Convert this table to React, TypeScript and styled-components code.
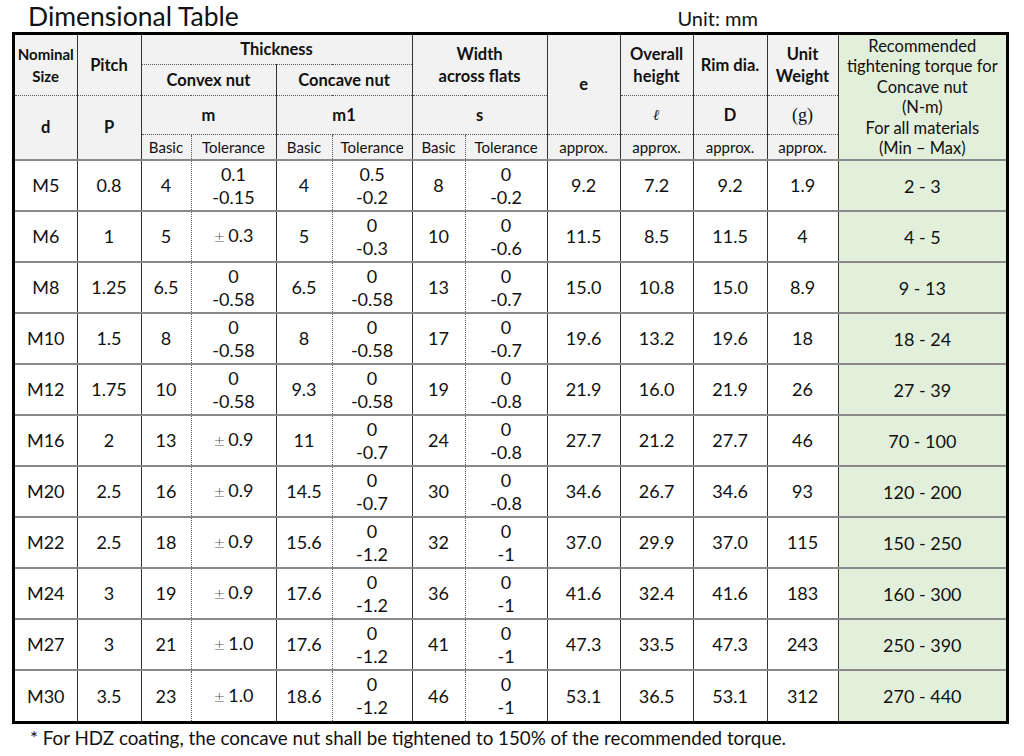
import styled, { createGlobalStyle } from 'styled-components';

type Tol = string | [string, string];

type NutRow = {
  size: string;
  pitch: string;
  m: string;
  mTol: Tol;
  m1: string;
  m1Tol: Tol;
  s: string;
  sTol: Tol;
  e: string;
  height: string;
  rim: string;
  weight: string;
  torque: string;
};

const rows: NutRow[] = [
  { size: 'M5', pitch: '0.8', m: '4', mTol: ['0.1', '-0.15'], m1: '4', m1Tol: ['0.5', '-0.2'], s: '8', sTol: ['0', '-0.2'], e: '9.2', height: '7.2', rim: '9.2', weight: '1.9', torque: '2 - 3' },
  { size: 'M6', pitch: '1', m: '5', mTol: '0.3', m1: '5', m1Tol: ['0', '-0.3'], s: '10', sTol: ['0', '-0.6'], e: '11.5', height: '8.5', rim: '11.5', weight: '4', torque: '4 - 5' },
  { size: 'M8', pitch: '1.25', m: '6.5', mTol: ['0', '-0.58'], m1: '6.5', m1Tol: ['0', '-0.58'], s: '13', sTol: ['0', '-0.7'], e: '15.0', height: '10.8', rim: '15.0', weight: '8.9', torque: '9 - 13' },
  { size: 'M10', pitch: '1.5', m: '8', mTol: ['0', '-0.58'], m1: '8', m1Tol: ['0', '-0.58'], s: '17', sTol: ['0', '-0.7'], e: '19.6', height: '13.2', rim: '19.6', weight: '18', torque: '18 - 24' },
  { size: 'M12', pitch: '1.75', m: '10', mTol: ['0', '-0.58'], m1: '9.3', m1Tol: ['0', '-0.58'], s: '19', sTol: ['0', '-0.8'], e: '21.9', height: '16.0', rim: '21.9', weight: '26', torque: '27 - 39' },
  { size: 'M16', pitch: '2', m: '13', mTol: '0.9', m1: '11', m1Tol: ['0', '-0.7'], s: '24', sTol: ['0', '-0.8'], e: '27.7', height: '21.2', rim: '27.7', weight: '46', torque: '70 - 100' },
  { size: 'M20', pitch: '2.5', m: '16', mTol: '0.9', m1: '14.5', m1Tol: ['0', '-0.7'], s: '30', sTol: ['0', '-0.8'], e: '34.6', height: '26.7', rim: '34.6', weight: '93', torque: '120 - 200' },
  { size: 'M22', pitch: '2.5', m: '18', mTol: '0.9', m1: '15.6', m1Tol: ['0', '-1.2'], s: '32', sTol: ['0', '-1'], e: '37.0', height: '29.9', rim: '37.0', weight: '115', torque: '150 - 250' },
  { size: 'M24', pitch: '3', m: '19', mTol: '0.9', m1: '17.6', m1Tol: ['0', '-1.2'], s: '36', sTol: ['0', '-1'], e: '41.6', height: '32.4', rim: '41.6', weight: '183', torque: '160 - 300' },
  { size: 'M27', pitch: '3', m: '21', mTol: '1.0', m1: '17.6', m1Tol: ['0', '-1.2'], s: '41', sTol: ['0', '-1'], e: '47.3', height: '33.5', rim: '47.3', weight: '243', torque: '250 - 390' },
  { size: 'M30', pitch: '3.5', m: '23', mTol: '1.0', m1: '18.6', m1Tol: ['0', '-1.2'], s: '46', sTol: ['0', '-1'], e: '53.1', height: '36.5', rim: '53.1', weight: '312', torque: '270 - 440' },
];

const colWidths = [62, 64, 50, 85, 56, 80, 53, 82, 73, 73, 74, 71, 168];

const ToleranceValue = ({ tol }: { tol: Tol }) => {
  if (typeof tol === 'string') {
    return (
      <span>
        <PlusMinus>±</PlusMinus>
        {tol}
      </span>
    );
  }
  return (
    <TolStack>
      <span>{tol[0]}</span>
      <span>{tol[1]}</span>
    </TolStack>
  );
};

const App = () => {
  return (
    <Page>
      <GlobalStyle />
      <TitleBar>
        <Title>Dimensional Table</Title>
        <Unit>Unit: mm</Unit>
      </TitleBar>
      <TableFrame>
        <Table>
          <colgroup>
            {colWidths.map((w, i) => (
              <col key={i} style={{ width: w }} />
            ))}
          </colgroup>
          <thead>
            <HeadRow $h={29}>
              <HeadCell rowSpan={2} $size={15}>
                Nominal
                <br />
                Size
              </HeadCell>
              <HeadCell rowSpan={2}>Pitch</HeadCell>
              <HeadCell colSpan={4}>Thickness</HeadCell>
              <HeadCell colSpan={2} rowSpan={2}>
                Width
                <br />
                across flats
              </HeadCell>
              <HeadCell rowSpan={3}>e</HeadCell>
              <HeadCell rowSpan={2}>
                Overall
                <br />
                height
              </HeadCell>
              <HeadCell rowSpan={2}>Rim dia.</HeadCell>
              <HeadCell rowSpan={2}>
                Unit
                <br />
                Weight
              </HeadCell>
              <TorqueHead rowSpan={4}>
                Recommended
                <br />
                tightening torque for
                <br />
                Concave nut
                <br />
                (N-m)
                <br />
                For all materials
                <br />
                (Min – Max)
              </TorqueHead>
            </HeadRow>
            <HeadRow $h={31}>
              <HeadCell colSpan={2}>Convex nut</HeadCell>
              <HeadCell colSpan={2}>Concave nut</HeadCell>
            </HeadRow>
            <HeadRow $h={39}>
              <HeadCell rowSpan={2} $closing>
                d
              </HeadCell>
              <HeadCell rowSpan={2} $closing>
                P
              </HeadCell>
              <HeadCell colSpan={2}>m</HeadCell>
              <HeadCell colSpan={2}>m1</HeadCell>
              <HeadCell colSpan={2}>s</HeadCell>
              <HeadCell>
                <Script>ℓ</Script>
              </HeadCell>
              <HeadCell>D</HeadCell>
              <HeadCell>
                <Gram>(g)</Gram>
              </HeadCell>
            </HeadRow>
            <HeadRow $h={26}>
              <SubCell $dotted>Basic</SubCell>
              <SubCell>Tolerance</SubCell>
              <SubCell $dotted>Basic</SubCell>
              <SubCell>Tolerance</SubCell>
              <SubCell $dotted>Basic</SubCell>
              <SubCell>Tolerance</SubCell>
              <SubCell>approx.</SubCell>
              <SubCell>approx.</SubCell>
              <SubCell>approx.</SubCell>
              <SubCell>approx.</SubCell>
            </HeadRow>
          </thead>
          <tbody>
            {rows.map((r, i) => {
              const last = i === rows.length - 1;
              return (
                <DataRow key={r.size}>
                  <Cell $last={last}>{r.size}</Cell>
                  <Cell $last={last}>{r.pitch}</Cell>
                  <Cell $last={last} $dotted>
                    {r.m}
                  </Cell>
                  <Cell $last={last}>
                    <ToleranceValue tol={r.mTol} />
                  </Cell>
                  <Cell $last={last} $dotted>
                    {r.m1}
                  </Cell>
                  <Cell $last={last}>
                    <ToleranceValue tol={r.m1Tol} />
                  </Cell>
                  <Cell $last={last} $dotted>
                    {r.s}
                  </Cell>
                  <Cell $last={last}>
                    <ToleranceValue tol={r.sTol} />
                  </Cell>
                  <Cell $last={last}>{r.e}</Cell>
                  <Cell $last={last}>{r.height}</Cell>
                  <Cell $last={last}>{r.rim}</Cell>
                  <Cell $last={last}>{r.weight}</Cell>
                  <TorqueCell $last={last}>{r.torque}</TorqueCell>
                </DataRow>
              );
            })}
          </tbody>
        </Table>
      </TableFrame>
      <Note>* For HDZ coating, the concave nut shall be tightened to 150% of the recommended torque.</Note>
    </Page>
  );
};

export default App;

const GlobalStyle = createGlobalStyle`
  html, body {
    margin: 0;
    padding: 0;
    background: #ffffff;
  }

  body {
    font-family: Lato, "Noto Sans", "DejaVu Sans", sans-serif;
    color: #111111;
  }
`;

const Page = styled.div`
  width: 1024px;
  height: 756px;
  overflow: hidden;
  background: #ffffff;
`;

const TitleBar = styled.div`
  display: flex;
  align-items: baseline;
  justify-content: space-between;
  height: 32px;
  padding: 0 266px 0 28px;
  box-sizing: border-box;
`;

const Title = styled.h1`
  margin: 0;
  font-size: 26.5px;
  font-weight: 400;
  line-height: 32px;
  color: #111111;
`;

const Unit = styled.span`
  font-size: 20px;
  line-height: 30px;
  color: #111111;
`;

const TableFrame = styled.div`
  margin-left: 12px;
  width: 997px;
  border: 3px solid #000000;
  box-sizing: border-box;
`;

const Table = styled.table`
  width: 991px;
  table-layout: fixed;
  border-collapse: collapse;
  border-spacing: 0;
`;

const HeadRow = styled.tr<{ $h: number }>`
  height: ${(p) => p.$h}px;
`;

const HeadCell = styled.th<{ $size?: number; $closing?: boolean }>`
  padding: 0;
  background: #f2f2f2;
  font-size: ${(p) => p.$size ?? 16.5}px;
  font-weight: 700;
  line-height: 22px;
  text-align: center;
  vertical-align: middle;
  color: #111111;
  border-right: 1px solid #333333;
  border-bottom: ${(p) => (p.$closing ? '2px solid #8a8a8a' : '1px dotted #555555')};
`;

const SubCell = styled.th<{ $dotted?: boolean }>`
  padding: 0;
  background: #f2f2f2;
  font-size: 15px;
  font-weight: 400;
  line-height: 20px;
  text-align: center;
  vertical-align: middle;
  color: #111111;
  border-right: ${(p) => (p.$dotted ? '1px dotted #555555' : '1px solid #333333')};
  border-bottom: 2px solid #8a8a8a;
`;

const TorqueHead = styled.th`
  padding: 0;
  background: #e2efda;
  font-size: 16.5px;
  font-weight: 400;
  line-height: 20.5px;
  text-align: center;
  vertical-align: middle;
  color: #111111;
  border-bottom: 2px solid #8a8a8a;
`;

const Script = styled.span`
  font-family: "DejaVu Serif", serif;
  font-style: italic;
  font-weight: 700;
  font-size: 15px;
`;

const Gram = styled.span`
  font-family: "Liberation Serif", serif;
  font-weight: 400;
  font-size: 18px;
`;

const DataRow = styled.tr`
  height: 51px;
`;

const Cell = styled.td<{ $dotted?: boolean; $last?: boolean }>`
  padding: 0;
  font-size: 18px;
  line-height: 23px;
  text-align: center;
  vertical-align: middle;
  color: #111111;
  border-right: ${(p) => (p.$dotted ? '1px dotted #555555' : '1px solid #333333')};
  border-bottom: ${(p) => (p.$last ? 'none' : '2px solid #8a8a8a')};
`;

const TorqueCell = styled.td<{ $last?: boolean }>`
  padding: 0;
  background: #e2efda;
  font-size: 18px;
  text-align: center;
  vertical-align: middle;
  color: #111111;
  border-bottom: ${(p) => (p.$last ? 'none' : '2px solid #8a8a8a')};
`;

const TolStack = styled.span`
  display: flex;
  flex-direction: column;
  align-items: center;
`;

const PlusMinus = styled.span`
  font-family: "DejaVu Sans", sans-serif;
  font-size: 14px;
  font-weight: 300;
  color: #555555;
  margin-right: 3px;
`;

const Note = styled.p`
  margin: 2px 0 0 30px;
  font-size: 18.8px;
  line-height: 24px;
  color: #111111;
`;
